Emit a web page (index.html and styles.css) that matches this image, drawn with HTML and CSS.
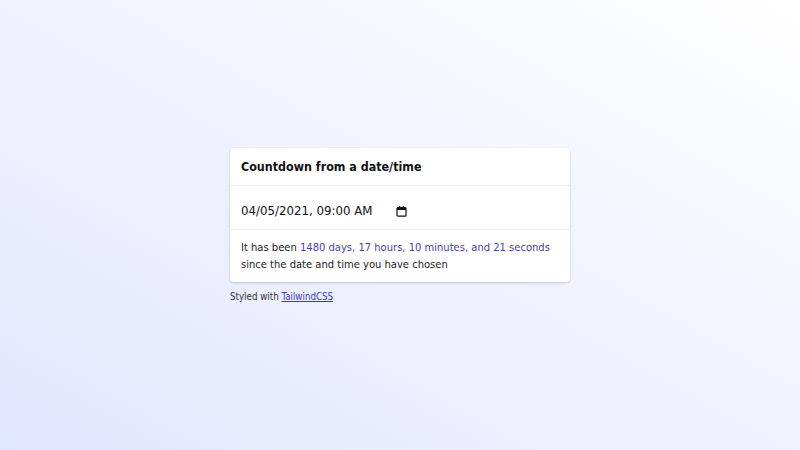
FILE: index.html
```html
<!DOCTYPE html>
<html>
<head>
<meta charset="utf-8">
<link rel="stylesheet" href="styles.css">
</head>
<body>
<main class="page">
  <div class="wrap">
    <div class="card">
      <div class="card-head">Countdown from a date/time</div>
      <div class="card-input">
        <span class="dt">04/05/2021, 09:00 AM</span>
        <svg class="cal" width="11" height="11" viewBox="0 0 11 11"><rect x="1" y="1.6" width="9" height="8.6" rx="1" fill="none" stroke="#111" stroke-width="1.2"/><rect x="1" y="1.6" width="9" height="2.4" fill="#111"/><rect x="3" y="0" width="1.2" height="2" fill="#111"/><rect x="6.8" y="0" width="1.2" height="2" fill="#111"/></svg>
      </div>
      <div class="card-body">
        It has been <span class="accent">1480 days, 17 hours, 10 minutes, and 21 seconds</span> since the date and time you have chosen
      </div>
    </div>
    <p class="credit">Styled with <a href="#">TailwindCSS</a></p>
  </div>
</main>
</body>
</html>
```
FILE: styles.css
```css
html, body { margin: 0; padding: 0; }
body {
  font-family: "DejaVu Sans Condensed", "DejaVu Sans", sans-serif;
  font-stretch: condensed;
  color: #1f2937;
}
.page {
  width: 800px;
  height: 450px;
  background: linear-gradient(to top right, #e0e6fd, #ffffff);
  display: flex;
  flex-direction: column;
  align-items: center;
}
.wrap { width: 340px; margin-top: 148px; }
.card {
  background: #fff;
  border-radius: 4px;
  box-shadow: 0 1px 3px rgba(0,0,0,0.12), 0 1px 2px rgba(0,0,0,0.08);
}
.card-head {
  height: 38px;
  box-sizing: border-box;
  padding: 0 11px 1px;
  display: flex;
  align-items: center;
  font-weight: bold;
  font-size: 12.4px;
  color: #111;
  border-bottom: 1px solid #eceef1;
}
.card-input {
  display: flex;
  align-items: center;
  height: 44px;
  box-sizing: border-box;
  padding: 7px 11px 0;
  border-bottom: 1px solid #eceef1;
  font-family: "DejaVu Sans", sans-serif;
  font-stretch: normal;
  font-size: 11.8px;
  color: #111;
}
.dt { width: 155px; }
.cal { display: block; }
.card-body {
  height: 52px;
  box-sizing: border-box;
  padding: 9px 11px 0;
  font-size: 11.1px;
  line-height: 17px;
  color: #222;
}
.accent { color: #4c3fa5; }
.credit {
  margin: 9px 0 0;
  font-size: 9.7px;
  color: #333;
}
.credit a { color: #4338ca; }
```
